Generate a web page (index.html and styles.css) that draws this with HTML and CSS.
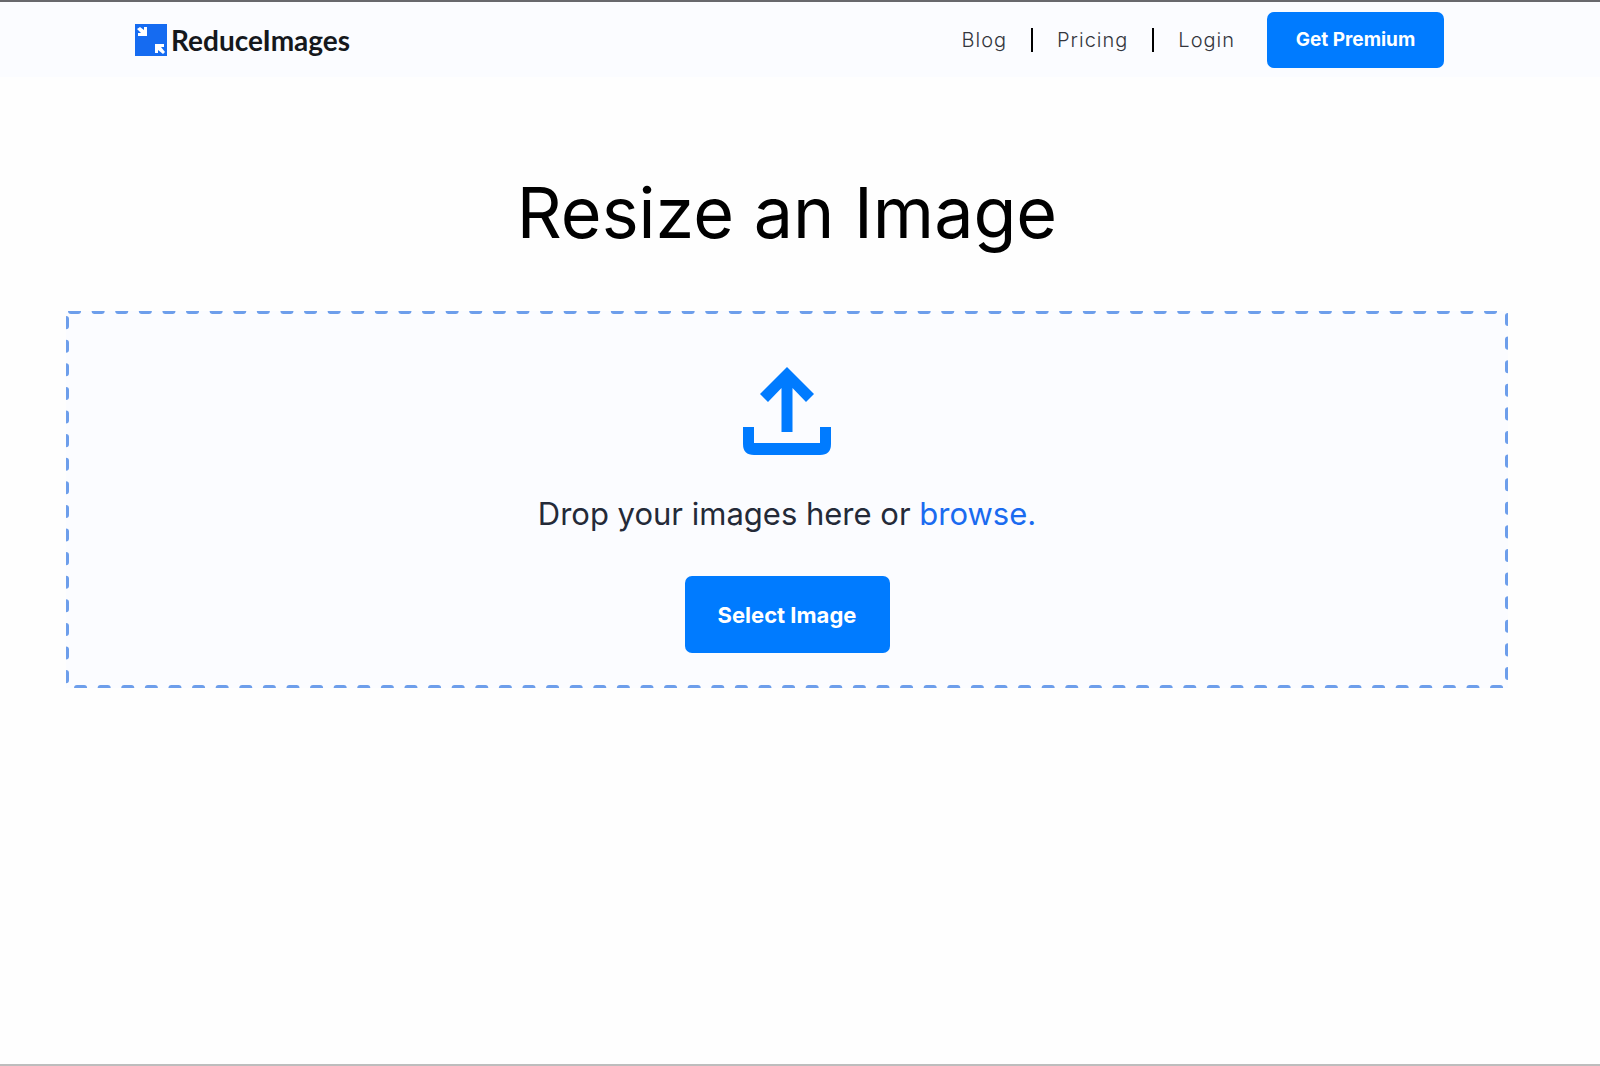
FILE: index.html
```html
<!DOCTYPE html>
<html lang="en">
<head>
<meta charset="utf-8">
<meta name="viewport" content="width=device-width, initial-scale=1">
<title>Resize an Image - ReduceImages</title>
<link rel="stylesheet" href="styles.css">
</head>
<body>
<header class="header">
  <a class="logo" href="#">
    <svg class="logo-mark" viewBox="0 0 32 32" aria-hidden="true">
      <path fill="#156bf1" d="M0 0h32v32H0z"/>
      <path fill="#fff" d="M2 5L5 3L9 6V3H12V12H3V9H6zM20 20H29V23H26L30 28L28 30L23 26V29H20z"/>
    </svg>
    <span>ReduceImages</span>
  </a>
  <nav class="nav">
    <a class="nav-link" href="#">Blog</a>
    <a class="nav-link" href="#">Pricing</a>
    <a class="nav-link" href="#">Login</a>
  </nav>
  <button class="button button-premium" type="button">Get Premium</button>
</header>
<main class="main">
  <h1 class="title">Resize an Image</h1>
  <section class="dropzone">
    <svg class="dropzone-outline" aria-hidden="true">
      <rect width="100%" height="100%" rx="5" fill="none" stroke="#6d9eeb" stroke-width="6" stroke-dasharray="7.08 16.52" stroke-linecap="round"/>
    </svg>
    <svg class="upload-icon" viewBox="0 0 88 88" aria-hidden="true">
      <path fill="#007bff" d="M44 0L71 27L63 35L49.500 21V65H38.500V21L25 35L17 27zM0 60H11V76H77V60H88V77Q88 88 77 88H11Q0 88 0 77z"/>
    </svg>
    <p class="prompt">Drop your images here or <a class="browse" href="#">browse.</a></p>
    <button class="button button-select" type="button">Select Image</button>
  </section>
</main>
</body>
</html>
```
FILE: styles.css
```css
* {
  box-sizing: border-box;
}

body {
  margin: 0;
  min-height: 100vh;
  background: #fefefe;
  border-top: 2px solid #68686c;
  border-bottom: 2px solid #bdbdbd;
  font-family: Inter, "Noto Sans", sans-serif;
  color: #000;
}

a {
  color: inherit;
  text-decoration: none;
}

.header {
  display: flex;
  align-items: center;
  height: 75px;
  padding: 0 156px 0 135px;
  background: #fbfcff;
}

.logo {
  display: flex;
  align-items: center;
  gap: 4px;
  margin-right: auto;
  font: 700 28px/32px Lato, sans-serif;
  color: #15181c;
}

.logo-mark {
  width: 32px;
  height: 32px;
}

.nav {
  display: flex;
}

.nav-link {
  padding: 0 24px;
  font-size: 20px;
  font-weight: 300;
  line-height: 24px;
  letter-spacing: 1px;
  color: #33363d;
}

.nav-link + .nav-link {
  border-left: 2px solid #000;
}

.button {
  border: 0;
  border-radius: 7px;
  background: #007bff;
  color: #fff;
  font-family: inherit;
  font-weight: 700;
}

.button-premium {
  width: 177px;
  height: 56px;
  margin-left: 8px;
  font-size: 19px;
}

.main {
  padding: 88px 92px 64px 66px;
}

.title {
  margin: 0;
  font-size: 70px;
  font-weight: 400;
  line-height: 96px;
  text-align: center;
}

.dropzone {
  position: relative;
  display: flex;
  flex-direction: column;
  align-items: center;
  margin-top: 50px;
  padding: 56px 24px 35px;
  background: #fbfcff;
}

.dropzone-outline {
  position: absolute;
  inset: 0;
  width: 100%;
  height: 100%;
  pointer-events: none;
}

.upload-icon {
  width: 88px;
  height: 88px;
}

.prompt {
  margin: 35px 0 38px;
  font-size: 31px;
  line-height: 48px;
  text-align: center;
  color: #242a38;
}

.browse {
  color: #1a6bf0;
}

.button-select {
  width: 205px;
  height: 77px;
  font-size: 22px;
}
```
